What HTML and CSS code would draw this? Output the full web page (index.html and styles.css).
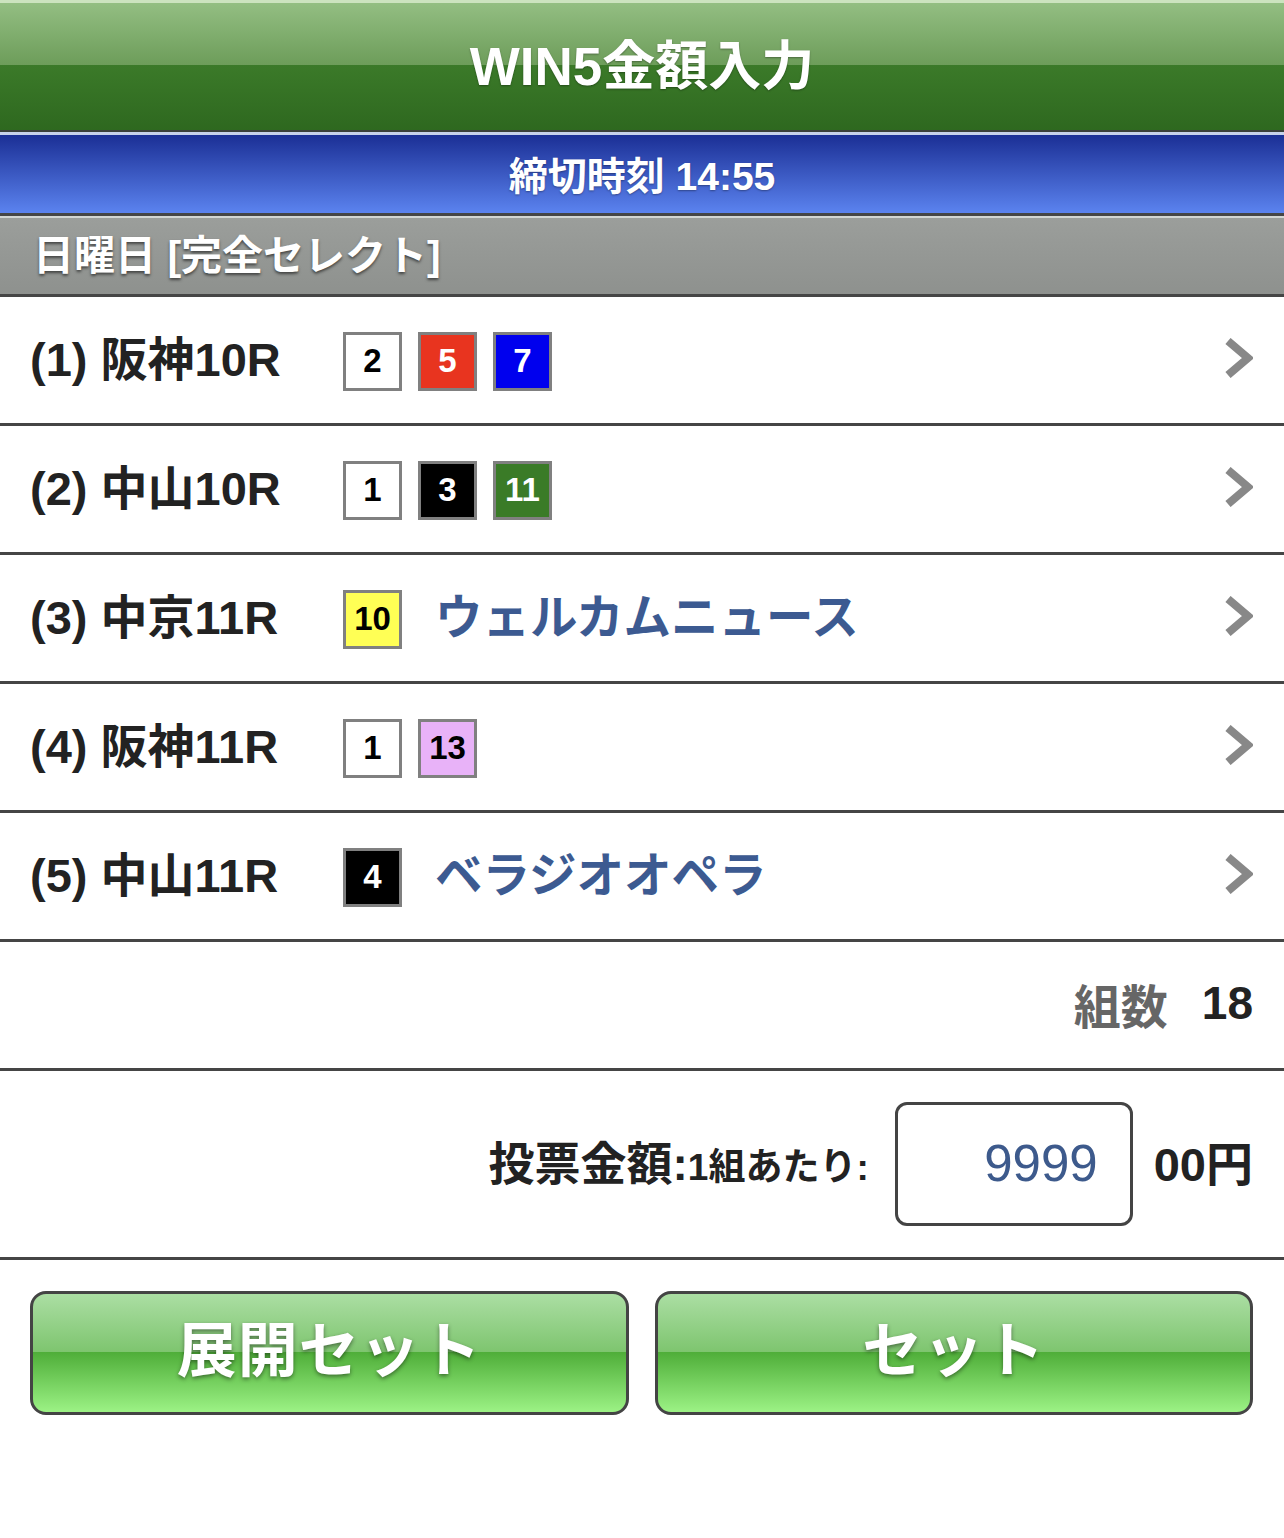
FILE: index.html
```html
<!DOCTYPE html>
<html lang="ja">
<head>
<meta charset="utf-8">
<title>WIN5金額入力</title>
<link rel="stylesheet" href="styles.css">
</head>
<body>
<div class="page">
  <header class="title-bar">WIN5金額入力</header>
  <div class="deadline">締切時刻 14:55</div>
  <div class="day-bar">日曜日 [完全セレクト]</div>

  <ul class="races">
    <li class="race">
      <span class="race-label">(1) 阪神10R</span>
      <div class="picks">
        <span class="num c-white">2</span>
        <span class="num c-red">5</span>
        <span class="num c-blue">7</span>
      </div>
      <svg class="chevron" viewBox="0 0 28 40" width="28" height="40"><polyline points="3,3 23,20 3,37" /></svg>
    </li>
    <li class="race">
      <span class="race-label">(2) 中山10R</span>
      <div class="picks">
        <span class="num c-white">1</span>
        <span class="num c-black">3</span>
        <span class="num c-green">11</span>
      </div>
      <svg class="chevron" viewBox="0 0 28 40" width="28" height="40"><polyline points="3,3 23,20 3,37" /></svg>
    </li>
    <li class="race">
      <span class="race-label">(3) 中京11R</span>
      <div class="picks">
        <span class="num c-yellow">10</span>
        <span class="horse">ウェルカムニュース</span>
      </div>
      <svg class="chevron" viewBox="0 0 28 40" width="28" height="40"><polyline points="3,3 23,20 3,37" /></svg>
    </li>
    <li class="race">
      <span class="race-label">(4) 阪神11R</span>
      <div class="picks">
        <span class="num c-white">1</span>
        <span class="num c-pink">13</span>
      </div>
      <svg class="chevron" viewBox="0 0 28 40" width="28" height="40"><polyline points="3,3 23,20 3,37" /></svg>
    </li>
    <li class="race">
      <span class="race-label">(5) 中山11R</span>
      <div class="picks">
        <span class="num c-black">4</span>
        <span class="horse">ベラジオオペラ</span>
      </div>
      <svg class="chevron" viewBox="0 0 28 40" width="28" height="40"><polyline points="3,3 23,20 3,37" /></svg>
    </li>
  </ul>

  <div class="count-row">
    <span class="count-label">組数</span>
    <span class="count-value">18</span>
  </div>

  <div class="amount-row">
    <span class="amount-label">投票金額:<small>1組あたり:</small></span>
    <div class="amount-input">9999</div>
    <span class="amount-unit">00円</span>
  </div>

  <div class="buttons">
    <button class="btn">展開セット</button>
    <button class="btn">セット</button>
  </div>
</div>
</body>
</html>
```

FILE: styles.css
```css
* { box-sizing: border-box; }

html, body {
  margin: 0;
  padding: 0;
  background: #ffffff;
}

body {
  font-family: "Liberation Sans", "Noto Sans CJK JP", sans-serif;
  font-weight: bold;
  color: #222222;
}

.page {
  width: 1284px;
}

.title-bar {
  height: 130px;
  display: flex;
  align-items: center;
  justify-content: center;
  padding-bottom: 7px;
  color: #ffffff;
  font-size: 53px;
  background: linear-gradient(#cce3bf 0, #cce3bf 3px, #93be82 3px, #6d9d5a 50%, #3b7a29 50%, #2e681f 100%);
  text-shadow: 0 1px 2px rgba(0, 0, 0, 0.35);
}

.deadline {
  border-top: 2px solid #3a3f3a;
  height: 83px;
  padding-top: 1px;
  display: flex;
  align-items: center;
  justify-content: center;
  color: #ffffff;
  font-size: 39px;
  background: linear-gradient(#c7d1ea 0, #c7d1ea 3px, #1b2f95 3px, #5b83ef 100%);
  text-shadow: 0 1px 2px rgba(0, 0, 0, 0.35);
}

.day-bar {
  border-top: 3px solid #454545;
  border-bottom: 3px solid #454545;
  height: 84px;
  padding: 0 0 6px 33px;
  display: flex;
  align-items: center;
  color: #ffffff;
  font-size: 41px;
  background: linear-gradient(#d3d6d3 0, #d3d6d3 2px, #9b9e9b 2px, #8e918e 100%);
  text-shadow: 0 2px 3px rgba(0, 0, 0, 0.55);
}

.races {
  list-style: none;
  margin: 0;
  padding: 0;
}

.race {
  height: 129px;
  border-bottom: 3px solid #454545;
  display: flex;
  align-items: center;
  padding: 0 31px 0 30px;
}

.race-label {
  width: 313px;
  flex: none;
  font-size: 47px;
  color: #222222;
  padding-bottom: 9px;
}

.picks {
  flex: 1;
  display: flex;
  align-items: center;
  gap: 16px;
  padding-top: 2px;
}

.num {
  width: 59px;
  height: 59px;
  border: 3px solid #808080;
  display: flex;
  align-items: center;
  justify-content: center;
  font-size: 33px;
  font-family: "Liberation Sans", sans-serif;
}

.c-white { background: #ffffff; color: #000000; }
.c-red { background: #e8341f; color: #ffffff; }
.c-blue { background: #0000ee; color: #ffffff; }
.c-black { background: #000000; color: #ffffff; }
.c-green { background: #3a7b27; color: #ffffff; }
.c-yellow { background: #ffff55; color: #000000; }
.c-pink { background: #e8b2f8; color: #000000; }

.horse {
  margin-left: 17px;
  font-size: 47.5px;
  color: #3c5a91;
  font-family: "Noto Sans CJK JP", sans-serif;
  line-height: 1;
  padding-bottom: 10px;
}

.chevron {
  flex: none;
  display: block;
  margin-top: -4px;
}

.chevron polyline {
  fill: none;
  stroke: #888888;
  stroke-width: 8;
  stroke-linejoin: miter;
}

.count-row {
  height: 129px;
  border-bottom: 3px solid #454545;
  display: flex;
  align-items: center;
  justify-content: flex-end;
  padding: 0 31px 4px 0;
  gap: 34px;
  font-size: 47px;
}

.count-label {
  color: #666666;
}

.count-value {
  color: #222222;
  font-size: 46px;
}

.amount-row {
  height: 189px;
  border-bottom: 3px solid #454545;
  display: flex;
  align-items: center;
  justify-content: flex-end;
  padding: 0 31px 0 0;
}

.amount-label {
  font-size: 46px;
  color: #222222;
  padding-bottom: 8px;
}

.amount-label small {
  font-size: 37px;
}

.amount-input {
  width: 238px;
  height: 124px;
  margin-left: 26px;
  border: 3px solid #444444;
  border-radius: 12px;
  display: flex;
  align-items: center;
  justify-content: flex-end;
  padding: 0 32px 2px 0;
  font-family: "Liberation Sans", sans-serif;
  font-weight: normal;
  font-size: 51px;
  color: #3d5a8c;
}

.amount-unit {
  margin-left: 21px;
  font-size: 47px;
  color: #222222;
  padding-bottom: 8px;
}

.buttons {
  display: flex;
  gap: 26px;
  padding: 31px 31px 0 30px;
}

.btn {
  flex: 1;
  height: 124px;
  border: 3px solid #444444;
  border-radius: 16px;
  background: linear-gradient(#abdea3 0%, #7ec56f 49%, #4fae39 49.5%, #9cf285 100%);
  color: #ffffff;
  font-family: "Noto Sans CJK JP", sans-serif;
  font-weight: bold;
  font-size: 60px;
  letter-spacing: 1px;
  text-shadow: 0 2px 4px rgba(0, 0, 0, 0.45);
  padding: 0 0 14px 0;
  line-height: 1;
  cursor: pointer;
}
```
